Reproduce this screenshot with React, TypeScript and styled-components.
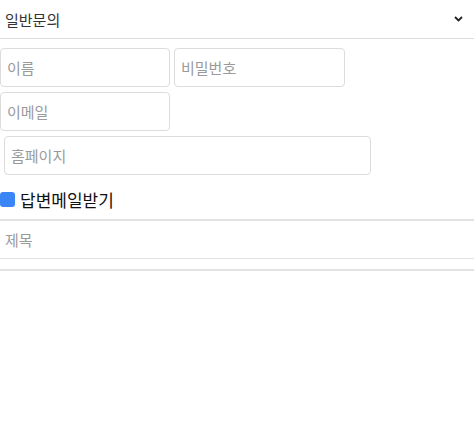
import React from "react";
import styled, { createGlobalStyle } from "styled-components";

const GlobalStyle = createGlobalStyle`
  html, body {
    margin: 0;
    padding: 0;
    background: #fff;
    font-family: "Noto Sans CJK KR", "Noto Sans", sans-serif;
  }
  * { box-sizing: border-box; }
`;

const Form = styled.form`
  width: 474px;
  display: flex;
  flex-direction: column;
`;

const SelectBox = styled.div`
  height: 39px;
  display: flex;
  align-items: center;
  justify-content: space-between;
  padding: 0 11px 0 5px;
  border-bottom: 1px solid #dedede;
  font-size: 15px;
  color: #333;
`;

const Fields = styled.div`
  display: flex;
  flex-direction: column;
  gap: 5px;
  margin-top: 9px;
`;

const Row = styled.div<{ $indent?: number }>`
  display: flex;
  gap: 4px;
  padding-left: ${({ $indent }) => $indent ?? 0}px;
`;

const Input = styled.input<{ $width: number }>`
  width: ${({ $width }) => $width}px;
  height: 39px;
  border: 1px solid #dcdcdc;
  border-radius: 4px;
  padding: 0 6px;
  font-family: inherit;
  font-size: 15px;
  color: #333;
  outline: none;
  &::placeholder {
    color: #9a9a9a;
  }
`;

const CheckRow = styled.label`
  display: flex;
  align-items: center;
  gap: 5px;
  height: 36px;
  margin-top: 6px;
  font-size: 17px;
  color: #111;
`;

const CheckBox = styled.span`
  width: 15px;
  height: 15px;
  border-radius: 3px;
  background: #3b86f7;
`;

const Subject = styled.input`
  width: 100%;
  height: 40px;
  margin-top: 2px;
  border: none;
  border-top: 2px solid #e2e2e2;
  border-bottom: 1px solid #e2e2e2;
  padding: 0 5px;
  font-family: inherit;
  font-size: 15px;
  outline: none;
  &::placeholder {
    color: #9a9a9a;
  }
`;

const Content = styled.div`
  margin-top: 10px;
  border-top: 2px solid #e2e2e2;
  height: 170px;
`;

const Chevron = () => (
  <svg width="9" height="6" viewBox="0 0 9 6">
    <path d="M1 1l3.5 3.5L8 1" fill="none" stroke="#222" strokeWidth="1.8" />
  </svg>
);

export default function App() {
  return (
    <>
      <GlobalStyle />
      <Form>
        <SelectBox>
          <span>일반문의</span>
          <Chevron />
        </SelectBox>
        <Fields>
          <Row>
            <Input $width={170} placeholder="이름" />
            <Input $width={171} type="password" placeholder="비밀번호" />
          </Row>
          <Row>
            <Input $width={170} placeholder="이메일" />
          </Row>
          <Row $indent={4}>
            <Input $width={367} placeholder="홈페이지" />
          </Row>
        </Fields>
        <CheckRow>
          <CheckBox />
          답변메일받기
        </CheckRow>
        <Subject placeholder="제목" />
        <Content />
      </Form>
    </>
  );
}
